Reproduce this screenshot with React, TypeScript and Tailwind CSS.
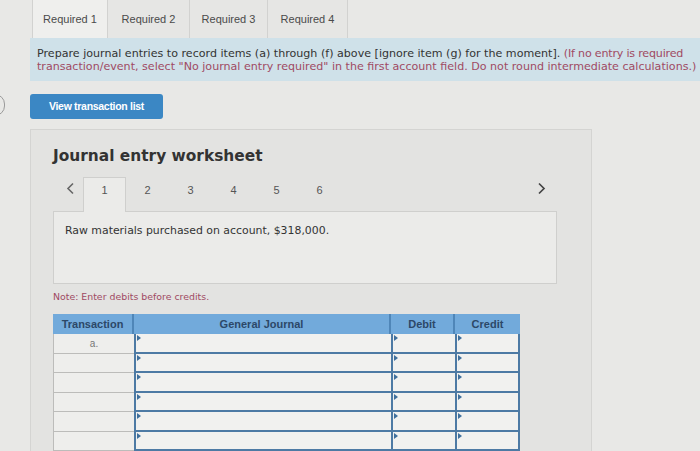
import React from "react";

const tabs = [
  { label: "Required 1", w: "w-[76px]", active: true },
  { label: "Required 2", w: "w-[82px]", active: false },
  { label: "Required 3", w: "w-[78px]", active: false },
  { label: "Required 4", w: "w-[80px]", active: false },
];

const steps = ["1", "2", "3", "4", "5", "6"];
const rows = ["a.", "", "", "", "", ""];

const Marker = () => (
  <span className="absolute left-[1px] top-[1px] w-0 h-0 border-y-[3px] border-y-transparent border-l-[4px] border-l-[#3f6f9c]" />
);

const App = () => {
  return (
    <main className="relative w-[700px] h-[451px] overflow-hidden bg-[#e8e8e6] font-['DejaVu_Sans',sans-serif]">
      {/* scroll handle on the left edge */}
      <div className="absolute -left-[15px] top-[94px] w-[20px] h-[22px] rounded-full border border-[#9a9a9a]" />

      <div className="flex h-[38px] pl-[32px]">
        {tabs.map((t) => (
          <div
            key={t.label}
            className={`${t.w} flex items-center justify-center border-r border-[#d2d2d0] text-[11px] text-[#4a4a4a] font-['Liberation_Sans',sans-serif] ${
              t.active ? "bg-[#efefed] border-l" : "bg-[#e6e6e4]"
            }`}
          >
            {t.label}
          </div>
        ))}
      </div>

      <div className="ml-[30px] h-[43px] bg-[#cfe1e9] pl-[7px] pt-[10px] text-[11.1px] leading-[12.5px] text-[#333] whitespace-nowrap">
        <div>
          Prepare journal entries to record items (a) through (f) above [ignore item (g) for the moment].{" "}
          <span className="text-[#a04a63] tracking-[-0.2px]">(If no entry is required</span>
        </div>
        <div className="text-[#a04a63]">
          transaction/event, select "No journal entry required" in the first account field. Do not round intermediate calculations.)
        </div>
      </div>

      <div className="ml-[30px] mt-[12px]">
        <button
          type="button"
          className="w-[133px] h-[25px] rounded-[3px] bg-[#3b87c4] text-white text-[10.5px] font-bold tracking-[-0.3px] font-['Liberation_Sans',sans-serif]"
        >
          View transaction list
        </button>
      </div>

      <section className="ml-[30px] mt-[10px] w-[562px] h-[340px] border border-[#d4d4d2] bg-[#e3e3e1] pl-[22px]">
        <h1 className="pt-[16px] text-[15.4px] leading-[20px] font-bold text-[#333]">
          Journal entry worksheet
        </h1>

        <div className="mt-[11px] flex items-start h-[34px] w-[504px] relative">
          <div className="w-[30px] pt-[5px] flex justify-center">
            <svg width="9" height="13" viewBox="0 0 9 13" className="ml-[4px]">
              <path d="M7 1.5 L2 6.5 L7 11.5" fill="none" stroke="#666" strokeWidth="1.6" />
            </svg>
          </div>
          {steps.map((s, i) => (
            <div
              key={s}
              className={`w-[43px] flex justify-center text-[11px] text-[#555] font-['Liberation_Sans',sans-serif] ${
                i === 0 ? "bg-[#ebebe9] border border-b-0 border-[#cfcfcd] relative z-10 h-[35px] pt-[4px]" : "h-full pt-[5px]"
              }`}
            >
              {s}
            </div>
          ))}
          <div className="flex-1" />
          <div className="w-[20px] pt-[5px] flex justify-start">
            <svg width="9" height="13" viewBox="0 0 9 13">
              <path d="M2 1.5 L7 6.5 L2 11.5" fill="none" stroke="#444" strokeWidth="1.7" />
            </svg>
          </div>
        </div>

        <div className="w-[504px] h-[73px] border border-[#cfcfcd] bg-[#ebebe9] pl-[11px] pt-[11px] text-[10.9px] text-[#333]">
          Raw materials purchased on account, $318,000.
        </div>

        <p className="mt-[6px] text-[9.4px] text-[#a04a63]">Note: Enter debits before credits.</p>

        <div className="mt-[10px] w-[467px] font-['Liberation_Sans',sans-serif]">
          <div className="flex h-[20px] bg-[#72aadb] text-[11px] font-bold text-[#2c4868]">
            <div className="w-[81px] flex items-center justify-center border-r-2 border-[#4f86b8]">Transaction</div>
            <div className="w-[257px] flex items-center justify-center border-r-2 border-[#4f86b8]">General Journal</div>
            <div className="w-[64px] flex items-center justify-center border-r-2 border-[#4f86b8]">Debit</div>
            <div className="w-[65px] flex items-center justify-center">Credit</div>
          </div>
          {rows.map((r, i) => (
            <div key={i} className="flex h-[19.5px]">
              <div className="w-[81px] border-l border-b border-[#bcbcba] bg-[#eeeeec] flex items-start justify-center pt-[2px] text-[10px] text-[#777]">
                {r}
              </div>
              <div className="relative w-[257px] bg-[#f1f1ef] border-l-2 border-b-2 border-[#4d7aa4]">
                <Marker />
              </div>
              <div className="relative w-[64px] bg-[#f1f1ef] border-l-2 border-b-2 border-[#4d7aa4]">
                <Marker />
              </div>
              <div className="relative w-[65px] bg-[#f1f1ef] border-l-2 border-r-2 border-b-2 border-[#4d7aa4]">
                <Marker />
              </div>
            </div>
          ))}
        </div>
      </section>
    </main>
  );
};

export default App;
